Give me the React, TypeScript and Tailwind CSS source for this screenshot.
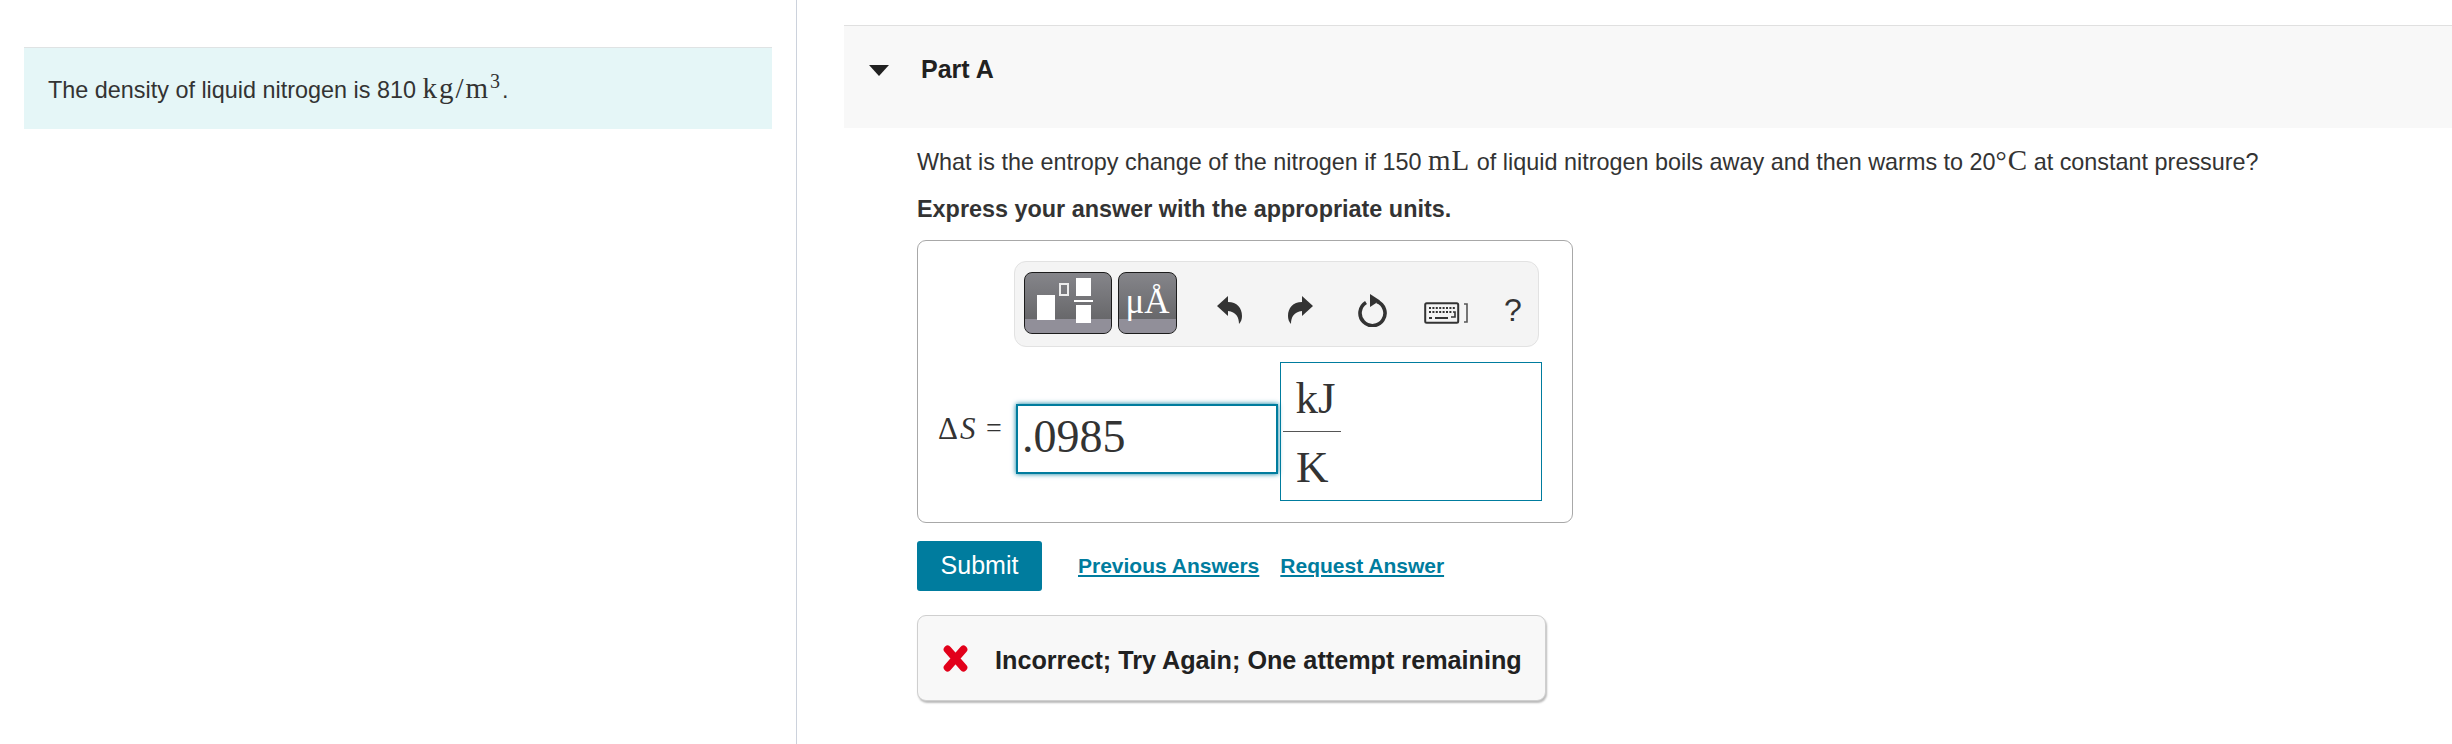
import type { ReactNode } from "react";

const serif = "font-['Liberation_Serif',serif]";

function Math({ children, className = "" }: { children: ReactNode; className?: string }) {
  return <span className={`${serif} ${className}`}>{children}</span>;
}

function TemplatesButton() {
  return (
    <div className="relative h-[62px] w-[88px] overflow-hidden rounded-[8px] border border-[#1c1c1c] bg-[linear-gradient(#85858a,#5f5f61)]">
      <div className="absolute bottom-0 left-0 h-[14px] w-full bg-[#918f99]" />
      <div className="absolute left-[12px] top-[22px] h-[25px] w-[18px] bg-white" />
      <div className="absolute left-[34px] top-[10px] h-[13px] w-[10px] border-2 border-[#ececec]" />
      <div className="absolute left-[51px] top-[5px] h-[18px] w-[15px] bg-white" />
      <div className="absolute left-[49px] top-[27px] h-[2px] w-[19px] bg-white" />
      <div className="absolute left-[51px] top-[32px] h-[18px] w-[15px] bg-white" />
    </div>
  );
}

function SymbolsButton() {
  return (
    <div className="relative h-[62px] w-[59px] overflow-hidden rounded-[8px] border border-[#1c1c1c] bg-[linear-gradient(#85858a,#5f5f61)]">
      <div className="absolute bottom-0 left-0 h-[14px] w-full bg-[#918f99]" />
      <div className={`absolute inset-x-0 top-[7px] text-center text-[35px] leading-[44px] text-white ${serif}`}>μÅ</div>
    </div>
  );
}

function UndoIcon({ flip = false }: { flip?: boolean }) {
  return (
    <svg viewBox="0 0 28 30" className={`h-[30px] w-[28px] ${flip ? "-scale-x-100" : ""}`}>
      <path
        fill="#333"
        d="M1 11 L12 1 V7 C21 7 26 13 26 21 C26 24 25 27 23 29 C23 22 20 17 12 16 V21 Z"
      />
    </svg>
  );
}

function ResetIcon() {
  return (
    <svg viewBox="0 0 32 34" className="h-[34px] w-[32px]">
      <path d="M10 9.5 A12.5 12.5 0 1 0 21 8.5" fill="none" stroke="#333" strokeWidth="3.6" />
      <path d="M14 1 L24 7.5 L14 14 Z" fill="#333" />
    </svg>
  );
}

function KeyboardIcon() {
  return (
    <svg viewBox="0 0 48 22" className="h-[22px] w-[48px]">
      <rect x="1.2" y="1.2" width="33" height="19.6" rx="1.5" fill="none" stroke="#333" strokeWidth="2" />
      <path d="M5 6 H31" stroke="#333" strokeWidth="2" strokeDasharray="2 1.4" />
      <path d="M5 10 H28" stroke="#333" strokeWidth="2" strokeDasharray="2 1.4" />
      <path d="M29 10 H31 V15 H27" stroke="#333" strokeWidth="1.6" fill="none" />
      <path d="M5 16 H8 M11 16 H24" stroke="#333" strokeWidth="2" />
      <path d="M40 2 H43 V20 H40" stroke="#555" strokeWidth="1.6" fill="none" />
    </svg>
  );
}

function Toolbar() {
  return (
    <div className="ml-[96px] flex h-[86px] w-[525px] items-start rounded-[12px] border border-[#e2e2e2] bg-[#f4f4f4] pl-[9px] pt-[10px]">
      <TemplatesButton />
      <div className="ml-[6px]">
        <SymbolsButton />
      </div>
      <div className="ml-[39px] mt-[23px]">
        <UndoIcon />
      </div>
      <div className="ml-[42px] mt-[23px]">
        <UndoIcon flip />
      </div>
      <div className="ml-[42px] mt-[21px]">
        <ResetIcon />
      </div>
      <div className="ml-[36px] mt-[30px]">
        <KeyboardIcon />
      </div>
      <div className="ml-[32px] mt-[22px] text-[32px] leading-[32px] text-[#333]">?</div>
    </div>
  );
}

function AnswerRow() {
  return (
    <div className="mt-[15px] flex items-start">
      <div className={`ml-[20px] mt-[49px] w-[44px] text-[31px] leading-[36px] tracking-[2px] text-[#333] ${serif}`}>
        Δ<i>S</i>
      </div>
      <div className={`ml-[4px] mt-[50px] w-[20px] text-[28px] leading-[32px] text-[#333] ${serif}`}>=</div>
      <div className="ml-[10px] mt-[42px] flex h-[70px] w-[262px] items-center border-2 border-[#007c9e] pb-[4px] pl-[4px] shadow-[0_0_5px_#007c9e]">
        <span className={`text-[46px] leading-none text-[#333] ${serif}`}>.0985</span>
      </div>
      <div className="ml-[2px] flex h-[139px] w-[262px] flex-col border border-[#007c9e] pl-[2px]">
        <div className={`flex h-[69px] w-[58px] items-end justify-center border-b border-[#555] pb-[10px] pl-[7px] text-[45px] leading-none text-[#333] ${serif}`}>
          kJ
        </div>
        <div className={`w-[58px] pl-[13px] pt-[11px] text-[45px] leading-[48px] text-[#333] ${serif}`}>K</div>
      </div>
    </div>
  );
}

export default function App() {
  return (
    <div className="flex h-[744px] w-[2452px] overflow-hidden bg-white font-['Liberation_Sans',sans-serif] text-[#333]">
      <aside className="h-full w-[797px] shrink-0 border-r border-[#ccd2dc] px-[24px] pt-[47px]">
        <div className="flex h-[82px] w-[748px] items-center border-t border-[#dfe3e4] bg-[#e5f6f7] pl-[24px] text-[23.4px]">
          <span>
            The density of liquid nitrogen is 810{" "}
            <Math className="text-[29px] tracking-[2px]">
              kg/m<sup className="text-[20px]">3</sup>
            </Math>
            .
          </span>
        </div>
      </aside>

      <main className="min-w-0 flex-1 pl-[47px] pt-[25px]">
        <div className="flex h-[103px] items-start border-t border-[#e0e0e0] bg-[#f8f8f8] pt-[28px]">
          <div className="ml-[25px] mt-[11px] h-0 w-0 border-x-[10px] border-t-[11px] border-x-transparent border-t-[#212121]" />
          <h2 className="ml-[32px] text-[25px] font-bold leading-[30px] text-[#212121]">Part A</h2>
        </div>

        <div className="pl-[73px]">
          <p className="mt-[14px] text-[23.4px] leading-[36px]">
            What is the entropy change of the nitrogen if 150 <Math className="text-[29px] tracking-[1px]">mL</Math> of liquid nitrogen
            boils away and then warms to 20<Math className="text-[28px]">°</Math>
            <Math className="ml-[1px] text-[29px]">C</Math> at constant pressure?
          </p>
          <p className="mt-[12px] text-[23.4px] font-bold leading-[34px]">Express your answer with the appropriate units.</p>

          <div className="mt-[14px] h-[283px] w-[656px] rounded-[9px] border border-[#a8a8a8] pt-[20px]">
            <Toolbar />
            <AnswerRow />
          </div>

          <div className="mt-[18px] flex items-start">
            <button className="h-[50px] w-[125px] rounded-[3px] bg-[#007c9e] text-[25px] text-white">Submit</button>
            <a className="ml-[36px] mt-[11px] text-[21px] font-bold leading-[28px] text-[#007c9e] underline">Previous Answers</a>
            <a className="ml-[21px] mt-[11px] text-[21px] font-bold leading-[28px] text-[#007c9e] underline">Request Answer</a>
          </div>

          <div className="mt-[24px] flex h-[86px] w-[629px] items-center rounded-[9px] border border-[#cfcfcf] bg-[#f8f8f8] pl-[24px] shadow-[1px_2px_2px_#bbb]">
            <svg viewBox="0 0 24 24" className="h-[27px] w-[27px]">
              <path d="M5 4 L19 20 M19 4 L5 20" stroke="#e2001a" strokeWidth="7" strokeLinecap="round" />
            </svg>
            <span className="ml-[26px] pt-[6px] text-[25.2px] font-bold text-[#212121]">Incorrect; Try Again; One attempt remaining</span>
          </div>
        </div>
      </main>
    </div>
  );
}
